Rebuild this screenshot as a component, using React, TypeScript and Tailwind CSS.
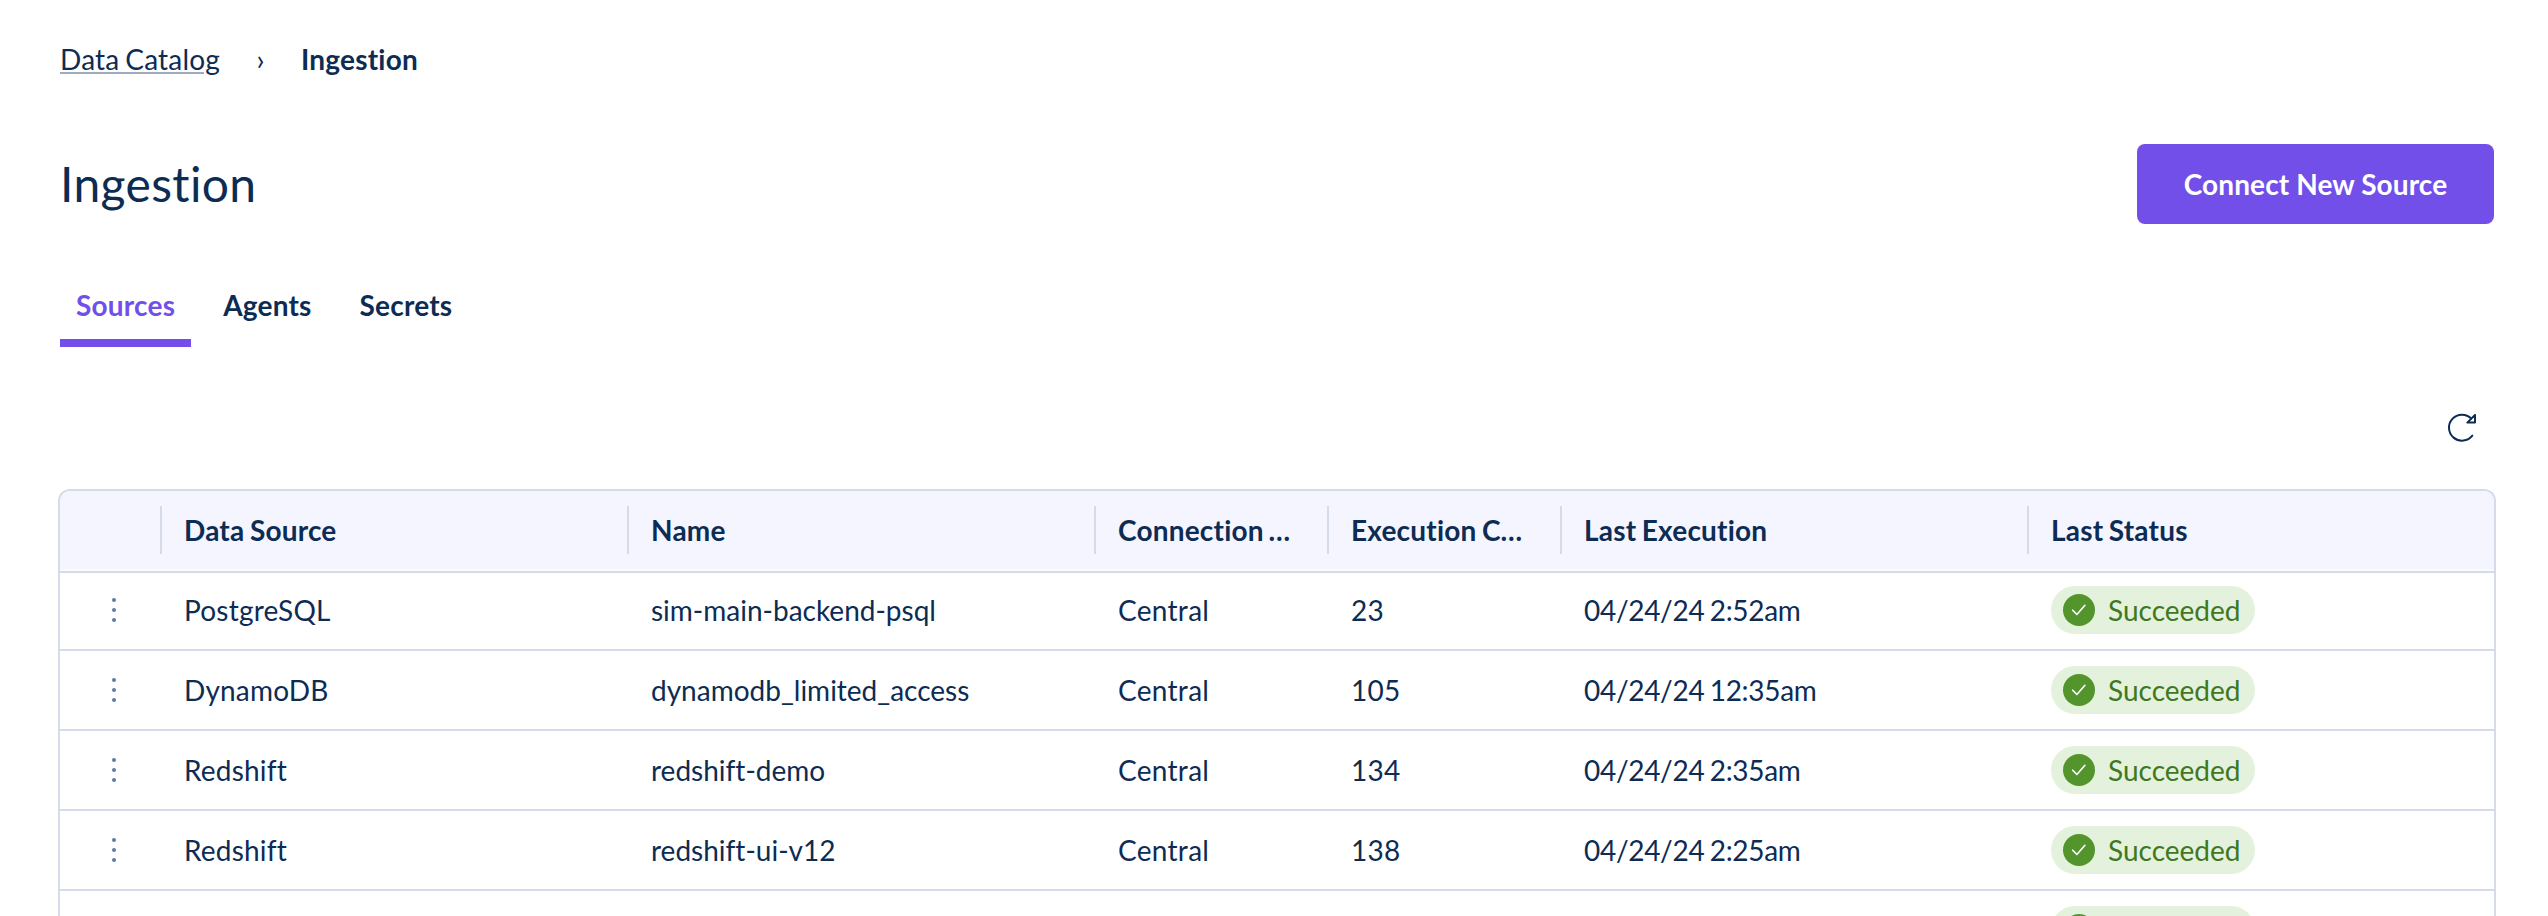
const columns = [
  { label: "Data Source" },
  { label: "Name" },
  { label: "Connection Type" },
  { label: "Execution Count" },
  { label: "Last Execution" },
  { label: "Last Status" },
];

const rows = [
  { source: "PostgreSQL", name: "sim-main-backend-psql", connection: "Central", count: 23, last: "04/24/24 2:52am" },
  { source: "DynamoDB", name: "dynamodb_limited_access", connection: "Central", count: 105, last: "04/24/24 12:35am" },
  { source: "Redshift", name: "redshift-demo", connection: "Central", count: 134, last: "04/24/24 2:35am" },
  { source: "Redshift", name: "redshift-ui-v12", connection: "Central", count: 138, last: "04/24/24 2:25am" },
  { source: "", name: "", connection: "", count: null, last: "" },
];

const gridCols = "grid grid-cols-[102px_467px_467px_233px_233px_467px_1fr]";

const RefreshIcon = () => (
  <svg width="32" height="32" viewBox="0 0 32 32" fill="none" stroke="currentColor" strokeWidth="2" strokeLinecap="round" strokeLinejoin="round">
    <path d="M26.3 23.6A13 13 0 1 1 25.2 6.5" />
    <path d="M29 2.9v7.7h-7.7z" />
  </svg>
);

const KebabIcon = () => (
  <svg width="4" height="24" viewBox="0 0 4 24" fill="#5c7ba6">
    <circle cx="2" cy="2" r="2" />
    <circle cx="2" cy="12" r="2" />
    <circle cx="2" cy="22" r="2" />
  </svg>
);

const StatusBadge = () => (
  <span className="inline-flex h-12 w-[204px] items-center gap-[13px] rounded-full bg-[#e4f1dc] pl-3 tracking-normal text-[#40781f]">
    <svg width="32" height="32" viewBox="0 0 32 32" fill="none">
      <circle cx="16" cy="16" r="16" fill="#54942d" />
      <path d="M9.7 16.2l4.2 4.3 8-9.2" stroke="#fff" strokeWidth="1.6" strokeLinecap="round" strokeLinejoin="round" />
    </svg>
    Succeeded
  </span>
);

const App = () => {
  return (
    <div className="h-[916px] overflow-hidden bg-white pl-[58px] pr-[52px] font-['Lato',sans-serif] text-[28px] leading-10 tracking-[0.2px] text-[#0d2c54] [font-variant-ligatures:none] [word-spacing:-1.5px]">
      <nav className="flex items-center pt-[39px] pl-0.5">
        <a href="#" className="underline decoration-[#9dabbb] decoration-2 underline-offset-2">Data Catalog</a>
        <span className="w-[81px] text-center">›</span>
        <span className="font-bold">Ingestion</span>
      </nav>

      <div className="mt-[65px] flex h-20 items-center justify-between px-0.5">
        <h1 className="text-[48px] tracking-[0.35px]">Ingestion</h1>
        <button className="h-20 w-[357px] rounded-lg bg-[#734fea] font-bold tracking-[0.1px] text-white">Connect New Source</button>
      </div>

      <div className="mt-[61px] flex pl-0.5 font-bold">
        <button className="border-b-8 border-[#734fea] px-4 pb-3.5 text-[#734fea]">Sources</button>
        <button className="ml-4 border-b-8 border-transparent px-4 pb-3.5">Agents</button>
        <button className="ml-4 border-b-8 border-transparent px-4 pb-3.5">Secrets</button>
      </div>

      <div className="mt-[65px] flex justify-end pr-[18px]">
        <button><RefreshIcon /></button>
      </div>

      <div className="mt-[45px] rounded-t-xl border-2 border-b-0 border-[#d6dbea]">
        <div className={`${gridCols} h-[82px] rounded-t-[10px] border-b-2 border-[#d6dbea] bg-[#f4f5ff] pb-0.5 font-bold shadow-[inset_0_-2px_0_#fafbff]`}>
          <div className="my-[15px] border-r-2 border-[#d6dbea]" />
          {columns.map((col, i) => (
            <div key={col.label} className={`my-[15px] flex min-w-0 items-center pl-[22px] pr-8 ${i < columns.length - 1 ? "border-r-2 border-[#d6dbea]" : ""}`}>
              <span className="truncate">{col.label}</span>
            </div>
          ))}
        </div>
        {rows.map((row, i) => (
          <div key={i} className={`${gridCols} items-center border-b-2 border-[#d6dbea] ${i === 0 ? "h-[78px] pb-0.5" : "h-20"}`}>
            <div className="flex justify-center pl-1.5"><KebabIcon /></div>
            <div className="pl-[22px]">{row.source}</div>
            <div className="pl-[22px] tracking-normal">{row.name}</div>
            <div className="pl-[22px] tracking-[0.3px]">{row.connection}</div>
            <div className="pl-[22px]">{row.count}</div>
            <div className="pl-[22px] tracking-[-0.3px]">{row.last}</div>
            <div className="flex pl-[22px]"><StatusBadge /></div>
          </div>
        ))}
      </div>
    </div>
  );
};

export default App;
